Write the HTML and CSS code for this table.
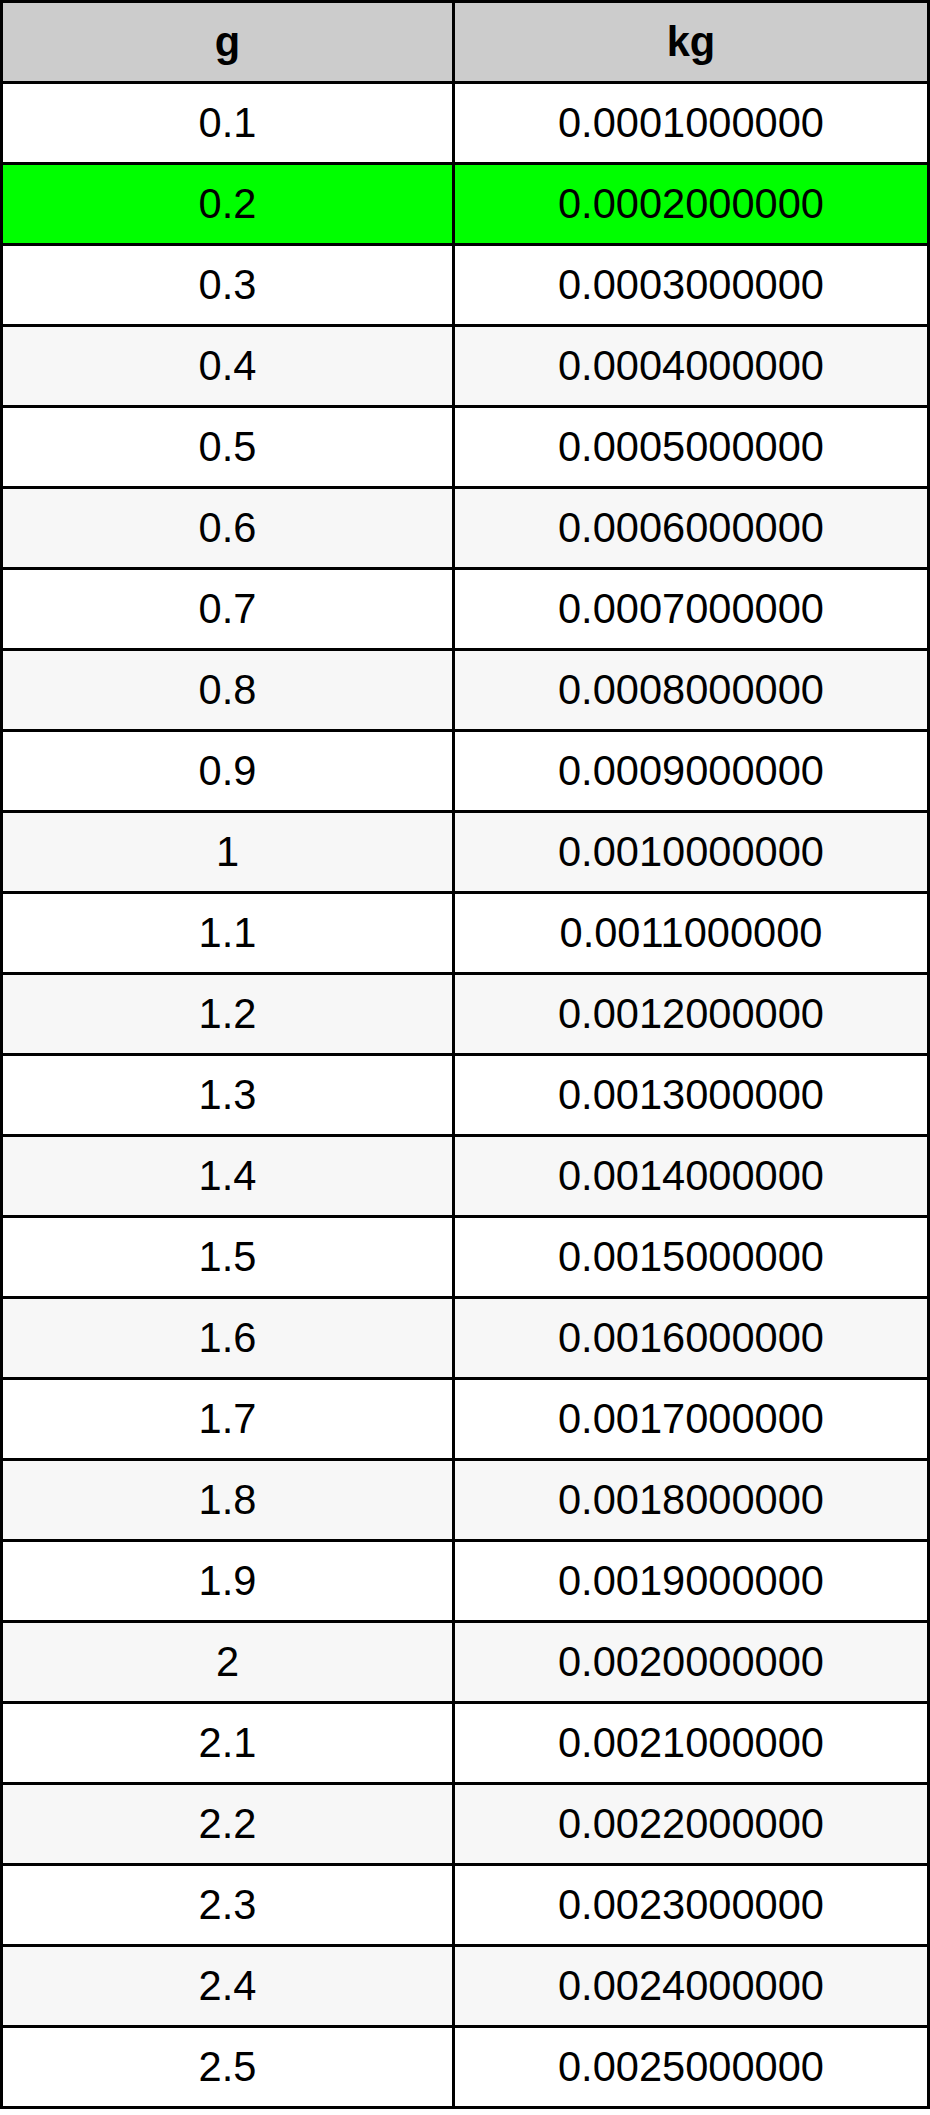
FILE: index.html
```html
<!DOCTYPE html>
<html lang="en">
<head>
<meta charset="utf-8">
<title>g to kg</title>
<link rel="stylesheet" href="styles.css">
</head>
<body>
<table class="conv">
<colgroup><col class="c1"><col class="c2"></colgroup>
<thead>
<tr><th>g</th><th>kg</th></tr>
</thead>
<tbody>
<tr><td>0.1</td><td>0.0001000000</td></tr>
<tr class="hl"><td>0.2</td><td>0.0002000000</td></tr>
<tr><td>0.3</td><td>0.0003000000</td></tr>
<tr><td>0.4</td><td>0.0004000000</td></tr>
<tr><td>0.5</td><td>0.0005000000</td></tr>
<tr><td>0.6</td><td>0.0006000000</td></tr>
<tr><td>0.7</td><td>0.0007000000</td></tr>
<tr><td>0.8</td><td>0.0008000000</td></tr>
<tr><td>0.9</td><td>0.0009000000</td></tr>
<tr><td>1</td><td>0.0010000000</td></tr>
<tr><td>1.1</td><td>0.0011000000</td></tr>
<tr><td>1.2</td><td>0.0012000000</td></tr>
<tr><td>1.3</td><td>0.0013000000</td></tr>
<tr><td>1.4</td><td>0.0014000000</td></tr>
<tr><td>1.5</td><td>0.0015000000</td></tr>
<tr><td>1.6</td><td>0.0016000000</td></tr>
<tr><td>1.7</td><td>0.0017000000</td></tr>
<tr><td>1.8</td><td>0.0018000000</td></tr>
<tr><td>1.9</td><td>0.0019000000</td></tr>
<tr><td>2</td><td>0.0020000000</td></tr>
<tr><td>2.1</td><td>0.0021000000</td></tr>
<tr><td>2.2</td><td>0.0022000000</td></tr>
<tr><td>2.3</td><td>0.0023000000</td></tr>
<tr><td>2.4</td><td>0.0024000000</td></tr>
<tr><td>2.5</td><td>0.0025000000</td></tr>
</tbody>
</table>
</body>
</html>
```
FILE: styles.css
```css
html, body {
  margin: 0;
  padding: 0;
  background: #ffffff;
}
.conv {
  width: 930px;
  border-collapse: collapse;
  table-layout: fixed;
  font-family: "Liberation Sans", Arial, sans-serif;
  font-size: 41.6px;
  color: #000;
  border: 3px solid #000;
}
.conv .c1 { width: 452px; }
.conv th,
.conv td {
  border: 3px solid #000;
  height: 78px;
  padding: 0;
  text-align: center;
  vertical-align: middle;
  line-height: 1;
}
.conv th {
  background: #cccccc;
  font-weight: bold;
}
.conv tbody tr:nth-child(even) td {
  background: #f7f7f7;
}
.conv tbody tr.hl td {
  background: #00ff00;
}
```
